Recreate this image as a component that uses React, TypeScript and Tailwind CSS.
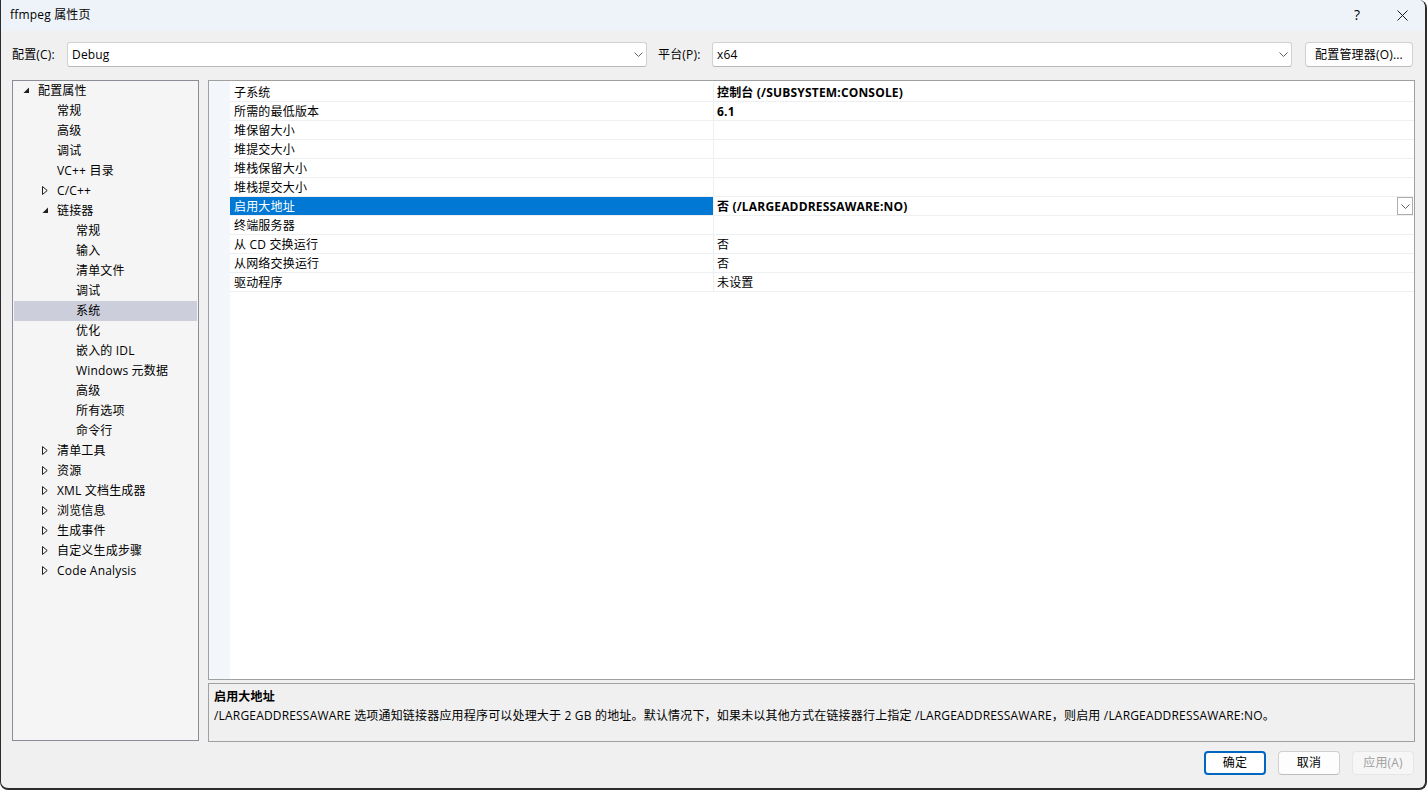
import React from 'react';

const font = { fontFamily: '"Open Sans", "Noto Sans CJK SC", sans-serif' };

type TreeItem = { label: string; level: 0 | 1 | 2; arrow?: 'open' | 'closed'; selected?: boolean };

const tree: TreeItem[] = [
  { label: '配置属性', level: 0, arrow: 'open' },
  { label: '常规', level: 1 },
  { label: '高级', level: 1 },
  { label: '调试', level: 1 },
  { label: 'VC++ 目录', level: 1 },
  { label: 'C/C++', level: 1, arrow: 'closed' },
  { label: '链接器', level: 1, arrow: 'open' },
  { label: '常规', level: 2 },
  { label: '输入', level: 2 },
  { label: '清单文件', level: 2 },
  { label: '调试', level: 2 },
  { label: '系统', level: 2, selected: true },
  { label: '优化', level: 2 },
  { label: '嵌入的 IDL', level: 2 },
  { label: 'Windows 元数据', level: 2 },
  { label: '高级', level: 2 },
  { label: '所有选项', level: 2 },
  { label: '命令行', level: 2 },
  { label: '清单工具', level: 1, arrow: 'closed' },
  { label: '资源', level: 1, arrow: 'closed' },
  { label: 'XML 文档生成器', level: 1, arrow: 'closed' },
  { label: '浏览信息', level: 1, arrow: 'closed' },
  { label: '生成事件', level: 1, arrow: 'closed' },
  { label: '自定义生成步骤', level: 1, arrow: 'closed' },
  { label: 'Code Analysis', level: 1, arrow: 'closed' },
];

type Prop = { name: string; value?: string; bold?: boolean; selected?: boolean };

const props: Prop[] = [
  { name: '子系统', value: '控制台 (/SUBSYSTEM:CONSOLE)', bold: true },
  { name: '所需的最低版本', value: '6.1', bold: true },
  { name: '堆保留大小' },
  { name: '堆提交大小' },
  { name: '堆栈保留大小' },
  { name: '堆栈提交大小' },
  { name: '启用大地址', value: '否 (/LARGEADDRESSAWARE:NO)', bold: true, selected: true },
  { name: '终端服务器' },
  { name: '从 CD 交换运行', value: '否' },
  { name: '从网络交换运行', value: '否' },
  { name: '驱动程序', value: '未设置' },
];

function Chevron({ className = '' }: { className?: string }) {
  return (
    <svg width="9" height="5" viewBox="0 0 9 5" className={className}>
      <path d="M0.5 0.5 L4.5 4.5 L8.5 0.5" fill="none" stroke="#606060" strokeWidth="1" />
    </svg>
  );
}

function Arrow({ kind }: { kind?: 'open' | 'closed' }) {
  if (kind === 'open') {
    return (
      <svg width="7" height="7" viewBox="0 0 7 7">
        <path d="M6 0.5 L6 6 L0.5 6 Z" fill="#1e1e1e" />
      </svg>
    );
  }
  if (kind === 'closed') {
    return (
      <svg width="6" height="9" viewBox="0 0 6 9">
        <path d="M0.5 0.5 L5.2 4.5 L0.5 8.5 Z" fill="none" stroke="#1e1e1e" strokeWidth="1" />
      </svg>
    );
  }
  return null;
}

function Combo({ value }: { value: string }) {
  return (
    <div className="flex h-[25px] w-[580px] items-center justify-between rounded-[3px] border border-[#d1d1d1] border-b-[#b8b8b8] bg-white pl-[4px] pr-[3px]">
      <span>{value}</span>
      <Chevron />
    </div>
  );
}

export default function App() {
  return (
    <div
      className="flex h-[790px] w-[1427px] flex-col overflow-hidden rounded-b-[8px] rounded-tr-[8px] border-b-2 border-l border-r-2 border-[#2d2d2d] bg-[#f0f0f0] text-[12px] leading-[18px] tracking-[0.18px] text-black"
      style={font}
    >
      {/* Title bar */}
      <div className="flex h-[31px] shrink-0 items-center justify-between bg-[#eef3f9] pb-[1px]">
        <span className="pl-[9px]">ffmpeg 属性页</span>
        <div className="flex h-full">
          <div className="flex w-[46px] items-center justify-center text-[14px]">?</div>
          <div className="flex w-[45px] items-center justify-center">
            <svg width="11" height="11" viewBox="0 0 11 11">
              <path d="M0.5 0.5 L10.5 10.5 M10.5 0.5 L0.5 10.5" stroke="#1a1a1a" strokeWidth="1" />
            </svg>
          </div>
        </div>
      </div>

      {/* Configuration row */}
      <div className="mt-[11px] flex h-[25px] shrink-0 items-center pl-[11px]">
        <span className="w-[55px]">配置(C):</span>
        <Combo value="Debug" />
        <span className="ml-[11px] w-[54px]">平台(P):</span>
        <Combo value="x64" />
        <button className="ml-[13px] flex h-[25px] w-[108px] items-center justify-center rounded-[4px] border border-[#d0d0d0] border-b-[#bdbdbd] bg-[#fdfdfd]">
          配置管理器(O)...
        </button>
      </div>

      {/* Main area */}
      <div className="mt-[13px] flex h-[662px] shrink-0 pl-[11px] pr-[10px]">
        {/* Tree */}
        <div className="h-[661px] w-[187px] shrink-0 border border-[#8a8d98] bg-[#f5f5f5]">
          {tree.map((item, i) => (
            <div
              key={i}
              className={`mx-[1px] flex h-[20px] items-center pb-[1px] ${item.selected ? 'bg-[#cccedb]' : ''} ${
                item.level === 0 ? 'pl-[7px]' : item.level === 1 ? 'pl-[26px]' : 'pl-[45px]'
              }`}
            >
              <span className="flex w-[17px] items-center pl-[2px]">
                <Arrow kind={item.arrow} />
              </span>
              <span>{item.label}</span>
            </div>
          ))}
        </div>

        {/* Right column */}
        <div className="ml-[9px] flex flex-1 flex-col">
          {/* Property grid */}
          <div className="h-[601px] border border-[#a0a0a0] bg-white">
            <div className="flex h-full">
              <div className="h-full w-[21px] shrink-0 bg-[#f3f6fb]" />
              <div className="flex-1 pt-[2px]">
                {props.map((p, i) => (
                  <div key={i} className="flex h-[19px] border-b border-[#eeeff1]">
                    <div
                      className={`flex w-[483px] items-center pl-[4px] pt-[1px] ${
                        p.selected ? 'bg-[#0078d4] text-white' : ''
                      }`}
                    >
                      {p.name}
                    </div>
                    <div className="flex flex-1 items-center justify-between border-l border-[#eeeff1] pl-[3px]">
                      <span className={`pt-[1px] ${p.bold ? 'font-bold' : ''}`}>{p.value ?? ''}</span>
                      {p.selected && (
                        <span className="mr-[1px] flex h-[18px] w-[16px] items-center justify-center border border-[#adadad] bg-white">
                          <Chevron />
                        </span>
                      )}
                    </div>
                  </div>
                ))}
              </div>
            </div>
          </div>

          {/* Description */}
          <div className="mt-[3px] h-[59px] border border-[#a0a0a0] bg-[#f0f0f0] px-[5px] pt-[3px] leading-[19px]">
            <div className="font-bold">启用大地址</div>
            <div>
              /LARGEADDRESSAWARE 选项通知链接器应用程序可以处理大于 2 GB 的地址。默认情况下，如果未以其他方式在链接器行上指定 /LARGEADDRESSAWARE，则启用 /LARGEADDRESSAWARE:NO。
            </div>
          </div>
        </div>
      </div>

      {/* Buttons */}
      <div className="mt-[9px] flex shrink-0 justify-end gap-[12px] pr-[11px]">
        <button className="flex h-[24px] w-[62px] items-center justify-center rounded-[4px] border-2 border-[#0067c0] bg-white">
          确定
        </button>
        <button className="flex h-[24px] w-[62px] items-center justify-center rounded-[4px] border border-[#d0d0d0] border-b-[#bdbdbd] bg-[#fdfdfd]">
          取消
        </button>
        <button className="flex h-[24px] w-[62px] items-center justify-center rounded-[4px] border border-[#e6e6e6] bg-[#f6f6f6] text-[#a0a0a0]">
          应用(A)
        </button>
      </div>
    </div>
  );
}
